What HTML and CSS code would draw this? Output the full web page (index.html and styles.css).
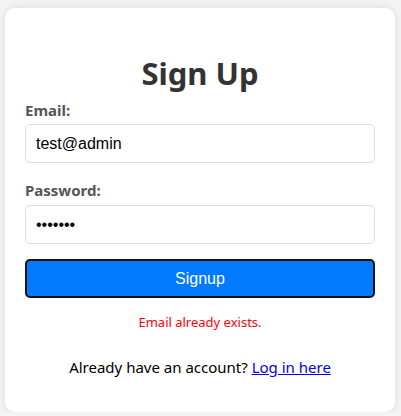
FILE: index.html
```html
<!DOCTYPE html>
<html>
<head>
<meta charset="utf-8">
<link rel="stylesheet" href="styles.css">
</head>
<body>
<div class="card">
  <h2 class="title">Sign Up</h2>
  <form class="form">
    <label class="label" for="email">Email:</label>
    <input class="input" id="email" type="text" value="test@admin">
    <label class="label" for="pw">Password:</label>
    <input class="input" id="pw" type="password" value="1234567">
    <button class="btn" type="button">Signup</button>
  </form>
  <p class="error">Email already exists.</p>
  <p class="footer">Already have an account? <a class="link" href="#">Log in here</a></p>
</div>
</body>
</html>
```
FILE: styles.css
```css
html, body { margin: 0; padding: 0; }
body {
  background: #f4f4f4;
  font-family: "Segoe UI", "Noto Sans", sans-serif;
  padding: 8px 6px 0 5px;
}
.card {
  background: #fff;
  width: 390px;
  box-sizing: border-box;
  padding: 20px;
  border-radius: 10px;
  box-shadow: 0 0 10px rgba(0,0,0,0.1);
  height: 404px;
}
.title {
  margin: 24px 0 5px;
  text-align: center;
  font-size: 31px;
  font-weight: 700;
  color: #333;
  line-height: 43px;
}
.form { display: flex; flex-direction: column; }
.label {
  font-size: 15px;
  font-weight: 700;
  color: #555;
  line-height: 20px;
  margin-bottom: 4px;
}
.input {
  font-family: "Liberation Sans", Arial, sans-serif;
  font-size: 16px;
  padding: 10px;
  border: 1px solid #ddd;
  border-radius: 5px;
  height: 39px;
  box-sizing: border-box;
  margin-bottom: 17px;
  color: #000;
  outline: none;
}
#pw { margin-bottom: 15px; }
.label + .input { margin-top: 0; }
.input + .label { margin-top: 0; }
#pw { margin-top: 1px; }
.btn {
  font-family: "Liberation Sans", Arial, sans-serif;
  font-size: 16px;
  height: 39px;
  background: #007bff;
  color: #fff;
  border: 2px solid #111;
  border-radius: 5px;
}
.error {
  color: #f00;
  font-size: 13px;
  text-align: center;
  margin: 15px 0 0;
  line-height: 18px;
}
.footer {
  text-align: center;
  font-size: 15px;
  margin: 25px 0 0;
  line-height: 22px;
  color: #000;
}
.link { color: #00e; }
```
